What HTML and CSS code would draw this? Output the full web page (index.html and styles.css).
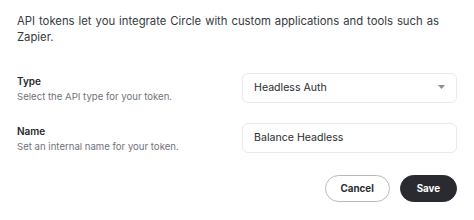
FILE: index.html
```html
<!DOCTYPE html>
<html>
<head>
<meta charset="utf-8">
<link rel="stylesheet" href="styles.css">
</head>
<body>
<div class="panel">
  <p class="intro">API tokens let you integrate Circle with custom applications and tools such as Zapier.</p>
  <div class="row row-first">
    <div class="label-col">
      <div class="label">Type</div>
      <div class="hint">Select the API type for your token.</div>
    </div>
    <div class="control select">
      <span>Headless Auth</span>
      <svg class="caret" width="7" height="4" viewBox="0 0 7 4"><path d="M0 0 L7 0 L3.5 4 Z" fill="#8a8d93"/></svg>
    </div>
  </div>
  <div class="row row-second">
    <div class="label-col">
      <div class="label">Name</div>
      <div class="hint">Set an internal name for your token.</div>
    </div>
    <div class="control input"><span>Balance Headless</span></div>
  </div>
  <div class="actions">
    <button class="btn btn-cancel">Cancel</button>
    <button class="btn btn-save">Save</button>
  </div>
</div>
</body>
</html>
```
FILE: styles.css
```css
html, body {
  margin: 0;
  padding: 0;
  background: #ffffff;
}
body {
  font-family: Inter, "Noto Sans", "Liberation Sans", sans-serif;
  color: #2e3138;
}
.panel {
  padding: 12.5px 17.3px 0 17px;
}
.intro {
  margin: 0;
  font-size: 11.3px;
  word-spacing: 0.8px;
  line-height: 16.7px;
  color: #363940;
}
.row {
  display: flex;
  justify-content: space-between;
  align-items: flex-start;
}
.row-first {
  margin-top: 27px;
}
.row-second {
  margin-top: 17.5px;
}
.label-col {
  padding-top: 1px;
}
.label {
  font-size: 10px;
  font-weight: 600;
  line-height: 14px;
  color: #26282d;
}
.hint {
  font-size: 9.6px;
  line-height: 16px;
  color: #6f727a;
  margin-top: 1.5px;
}
.control {
  width: 214.7px;
  height: 30px;
  box-sizing: border-box;
  border: 1px solid #eaeaec;
  border-radius: 6px;
  display: flex;
  align-items: center;
  justify-content: space-between;
  padding: 0 11px 0 11px;
  font-size: 10.6px;
  color: #2a2c31;
}
.caret {
  display: block;
  margin-top: -1px;
}
.actions {
  display: flex;
  justify-content: flex-end;
  gap: 10.3px;
  margin-top: 19.5px;
}
.btn {
  height: 27px;
  border-radius: 14px;
  font-family: Inter, "Noto Sans", "Liberation Sans", sans-serif;
  font-size: 9.8px;
  font-weight: 700;
  padding: 0;
  box-sizing: border-box;
}
.btn-cancel {
  width: 65px;
  background: #ffffff;
  border: 1px solid #b7b9bd;
  color: #2a2c31;
}
.btn-save {
  width: 56.7px;
  background: #2a2b30;
  border: 1px solid #2a2b30;
  color: #ffffff;
}
```
